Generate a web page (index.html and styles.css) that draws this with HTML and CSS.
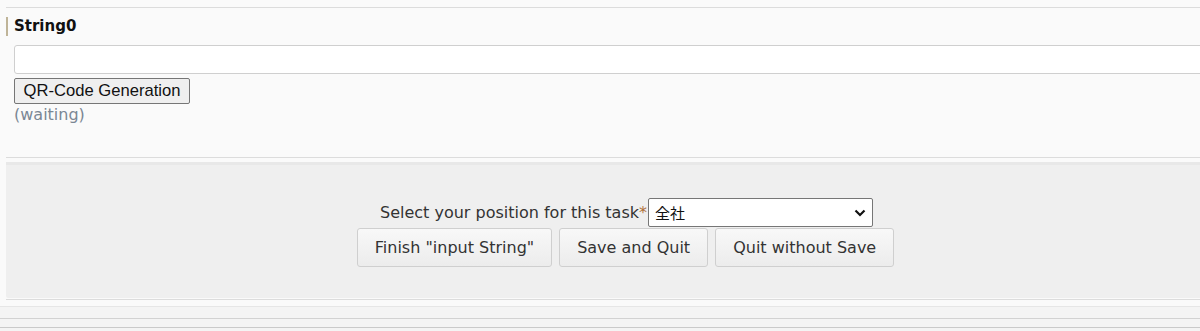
FILE: index.html
```html
<!DOCTYPE html>
<html lang="en">
<head>
<meta charset="utf-8">
<title>input String</title>
<link rel="stylesheet" href="styles.css">
</head>
<body>
<div class="page">
  <div class="form-area">
    <section class="field">
      <div class="field-label">String0</div>
      <div class="field-body">
        <input class="text-input" type="text" value="">
        <button class="qr-btn" type="button">QR-Code Generation</button>
        <div class="status">(waiting)</div>
      </div>
    </section>
  </div>
  <div class="action-panel">
    <div class="position-row">
      <span class="position-label">Select your position for this task<span class="req">*</span></span>
      <span class="select-wrap">
        <select class="position-select">
          <option>全社</option>
        </select>
        <svg class="chev" width="12" height="8" viewBox="0 0 12 8"><path d="M1.5 1.5 L6 6 L10.5 1.5" fill="none" stroke="#111" stroke-width="2.2"/></svg>
      </span>
    </div>
    <div class="button-row">
      <button class="act-btn" type="button">Finish "input String"</button>
      <button class="act-btn" type="button">Save and Quit</button>
      <button class="act-btn" type="button">Quit without Save</button>
    </div>
  </div>
  <div class="footer-gap"></div>
  <div class="footer-bands">
    <div class="band band-a"></div>
    <div class="band band-b"></div>
    <div class="band band-c"></div>
  </div>
</div>
</body>
</html>
```

FILE: styles.css
```css
html, body {
  margin: 0;
  padding: 0;
  background: #fafafa;
  overflow: hidden;
}

body {
  font-family: "DejaVu Sans", "Noto Sans CJK JP", sans-serif;
  font-size: 16px;
  color: #333;
}

.page {
  width: 1245px;
  padding-top: 7px;
}

.form-area {
  margin-left: 6px;
  border-top: 1px solid #dcdcdc;
  border-bottom: 1px solid #dcdcdc;
  padding: 9px 0 33px 0;
}

.field-label {
  border-left: 2px solid #bfb498;
  padding-left: 6px;
  height: 19px;
  line-height: 19px;
  font-weight: bold;
  font-size: 15px;
  color: #111;
}

.field-body {
  padding-left: 8px;
  padding-top: 9px;
}

.text-input {
  display: block;
  box-sizing: border-box;
  width: 100%;
  height: 29px;
  margin: 0;
  border: 1px solid #cfcfcf;
  border-radius: 3px;
  background: #fff;
  font-family: inherit;
  font-size: 16px;
  outline: none;
}

.qr-btn {
  display: block;
  box-sizing: border-box;
  margin-top: 4px;
  height: 26px;
  width: 176px;
  padding: 0;
  font-family: "Liberation Sans", Arial, sans-serif;
  font-size: 16.6px;
  color: #111;
  background: #efefef;
  border: 1px solid #767676;
  border-radius: 2px;
}

.status {
  margin-top: 1px;
  font-size: 16px;
  line-height: 19px;
  color: #7b8794;
}

.action-panel {
  margin: 4px 0 0 6px;
  background: #efefef;
  box-shadow: inset 0 3px 0 #e8e8e8;
  border-radius: 0 0 3px 3px;
  border-bottom: 1px solid #fafafa;
  padding-top: 36px;
  display: flex;
  flex-direction: column;
  align-items: center;
  height: 100px;
}

.position-row {
  display: flex;
  align-items: center;
  height: 29px;
  margin-left: 2px;
}

.position-label {
  font-size: 16px;
  color: #333;
  margin-right: 1px;
}

.req {
  color: #b0703a;
}

.select-wrap {
  position: relative;
  display: inline-block;
}

.position-select {
  -webkit-appearance: none;
  appearance: none;
  box-sizing: border-box;
  width: 225px;
  height: 29px;
  margin: 0;
  padding: 0 0 0 6px;
  font-family: "Noto Sans CJK JP", sans-serif;
  font-size: 15px;
  color: #111;
  background: #fff;
  border: 1px solid #767676;
  border-radius: 2px;
}

.chev {
  position: absolute;
  right: 7px;
  top: 11px;
  pointer-events: none;
}

.button-row {
  display: flex;
  gap: 7px;
  margin-top: 1px;
}

.act-btn {
  box-sizing: border-box;
  height: 39px;
  padding: 0 17px;
  font-family: "DejaVu Sans", sans-serif;
  font-size: 16px;
  color: #333;
  background: linear-gradient(#f8f8f8, #ececec);
  border: 1px solid #cfcfcf;
  border-radius: 3px;
}

.footer-gap {
  margin-left: 6px;
  border-top: 1px solid #dcdcdc;
  height: 6px;
}

.band {
  background: #f4f4f4;
}

.band-a {
  border-top: 1px solid #e6e6e6;
  height: 11px;
}

.band-b {
  border-top: 1px solid #d2d2d2;
  height: 8px;
}

.band-c {
  border-top: 1px solid #cacaca;
  height: 10px;
}
```
